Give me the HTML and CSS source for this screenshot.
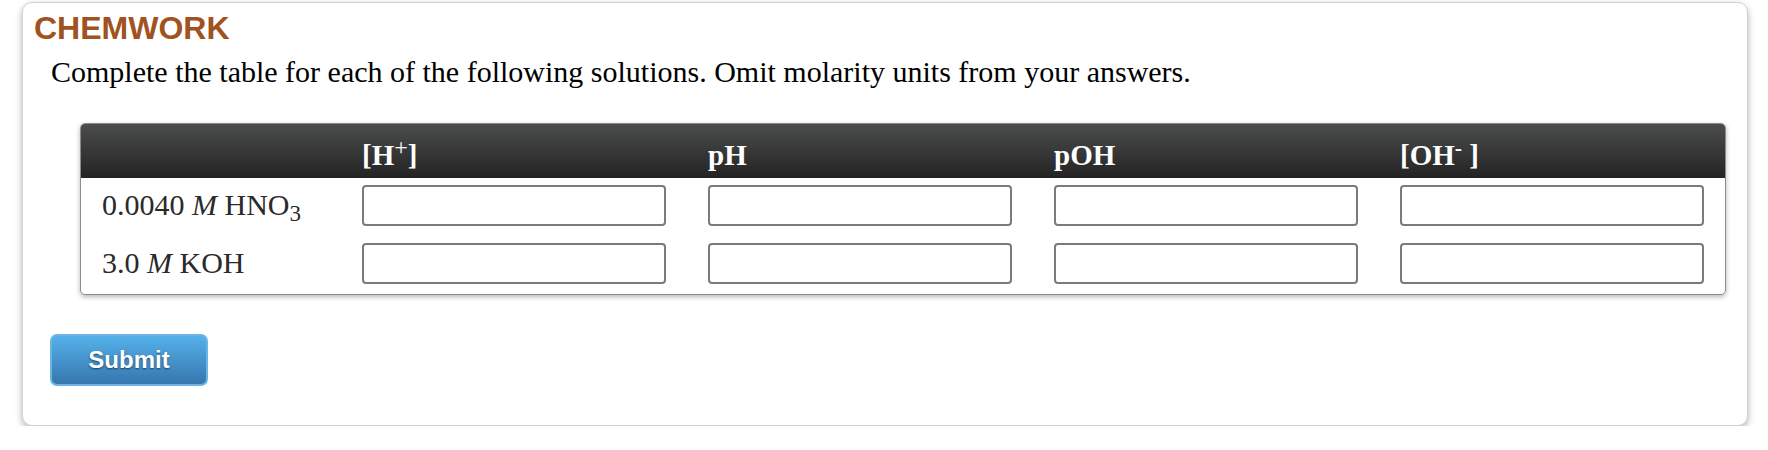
FILE: index.html
```html
<!DOCTYPE html>
<html lang="en">
<head>
<meta charset="utf-8">
<title>Chemwork</title>
<link rel="stylesheet" href="styles.css">
</head>
<body>
<div class="card">
  <h1 class="title">CHEMWORK</h1>
  <p class="prompt">Complete the table for each of the following solutions. Omit molarity units from your answers.</p>
  <div class="tbl">
    <div class="hd">
      <div class="hc"></div>
      <div class="hc">[H<sup class="sp">+</sup>]</div>
      <div class="hc">pH</div>
      <div class="hc">pOH</div>
      <div class="hc">[OH<sup class="sp sm">-</sup> ]</div>
    </div>
    <div class="row">
      <div class="lbl"><span>0.0040 <i>M</i> HNO<sub class="sb">3</sub></span></div>
      <div class="cell"><input class="box" type="text"></div>
      <div class="cell"><input class="box" type="text"></div>
      <div class="cell"><input class="box" type="text"></div>
      <div class="cell"><input class="box" type="text"></div>
    </div>
    <div class="row">
      <div class="lbl"><span>3.0 <i>M</i> KOH</span></div>
      <div class="cell"><input class="box" type="text"></div>
      <div class="cell"><input class="box" type="text"></div>
      <div class="cell"><input class="box" type="text"></div>
      <div class="cell"><input class="box" type="text"></div>
    </div>
  </div>
  <button class="submit" type="button">Submit</button>
</div>
</body>
</html>
```
FILE: styles.css
```css
html, body {
  margin: 0;
  background: #ffffff;
}
body {
  padding: 2px 20px 0 22px;
  font-family: "Liberation Serif", "Times New Roman", serif;
  color: #000;
}
.card {
  border: 1px solid #d2d2d2;
  border-radius: 10px;
  box-shadow: 0 3px 7px rgba(0, 0, 0, 0.3);
  padding: 9px 11px 39px 11px;
  background: #fff;
}
.title {
  margin: 0;
  font-family: "Liberation Sans", Arial, sans-serif;
  font-weight: bold;
  font-size: 32px;
  line-height: 32px;
  color: #a0521f;
}
.prompt {
  margin: 11px 0 0 17px;
  font-size: 30px;
  line-height: 1.15;
}
.tbl {
  margin: 33px 10px 0 46px;
  border: 1px solid #8c8c8c;
  border-radius: 5px;
  overflow: hidden;
  box-shadow: 0 2px 5px rgba(0, 0, 0, 0.3);
}
.hd, .row {
  display: grid;
  grid-template-columns: 260px repeat(4, 1fr);
}
.hd {
  background: linear-gradient(#4b4c4d, #232323);
  height: 54px;
}
.hc {
  padding: 15px 21px 0;
  color: #fff;
  font-weight: bold;
  font-size: 29px;
  line-height: 33px;
}
.sp {
  font-size: 24px;
  font-weight: normal;
  line-height: 0;
  vertical-align: 10px;
}
.sm {
  font-size: 22px;
  font-weight: bold;
}
.cell {
  padding: 7px 21px 10px;
}
.lbl {
  padding: 7px 21px 10px;
  font-size: 30px;
  line-height: 34px;
  display: flex;
  align-items: center;
  white-space: nowrap;
  color: #2a2a2a;
}
.sb {
  font-size: 23px;
  line-height: 0;
  vertical-align: -6px;
}
.box {
  display: block;
  box-sizing: border-box;
  width: 100%;
  height: 41px;
  margin: 0;
  border: 2px solid #7b7b7b;
  border-radius: 4px;
  background: #fff;
  outline: none;
}
.submit {
  display: block;
  margin: 39px 0 0 16px;
  width: 158px;
  height: 52px;
  border: 2px solid #6bb5e6;
  border-radius: 7px;
  background: linear-gradient(#55b1ea, #3677ae);
  color: #fff;
  font-family: "Liberation Sans", Arial, sans-serif;
  font-weight: bold;
  font-size: 24px;
  text-shadow: 0 1px 2px rgba(0, 0, 0, 0.55);
  padding: 0;
}
```
